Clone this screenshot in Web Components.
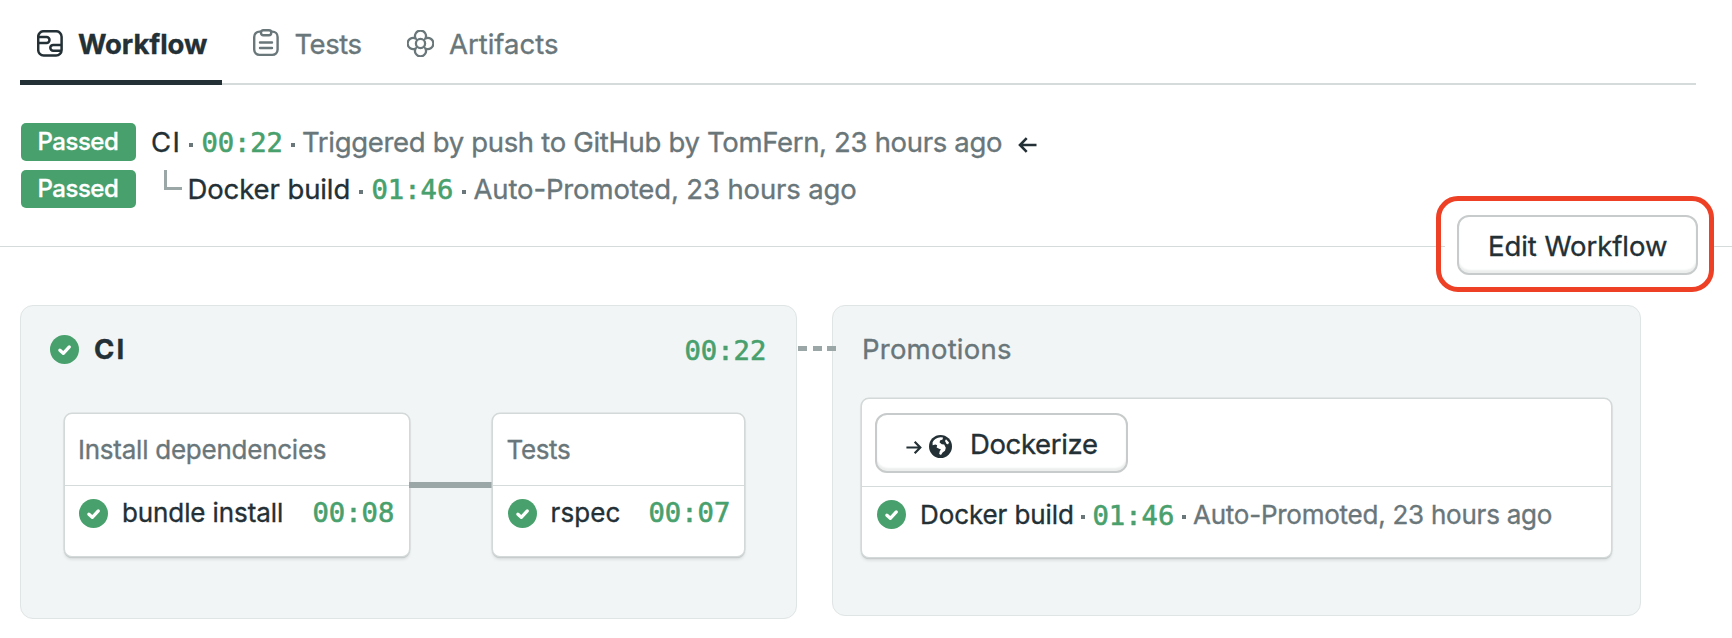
<!DOCTYPE html>
<html lang="en">
<head>
<meta charset="utf-8">
<title>Workflow</title>
<style>
  body { margin: 0; background: #fff; color: #233036; font-family: Inter, "Liberation Sans", sans-serif; }
</style>
</head>
<body>
<workflow-page></workflow-page>
<script>
const define = (name, html, setup) => {
  const tpl = document.createElement('template');
  tpl.innerHTML = html;
  customElements.define(name, class extends HTMLElement {
    constructor() {
      super();
      this.attachShadow({ mode: 'open' }).appendChild(tpl.content.cloneNode(true));
    }
    connectedCallback() { if (setup) setup(this, this.shadowRoot); }
  });
};

/* One run of text, tracked so that its ink fills the measure given in "fit". */
const ctx = document.createElement('canvas').getContext('2d');
define('ui-label', `
  <style>
    :host { display: block; flex: none; white-space: nowrap; line-height: 1; color: #233036; -webkit-text-stroke: .35px currentColor; }
    :host([tone=muted]) { color: #69767a; }
    :host([tone=white]) { color: #fff; }
    :host([tone=time]) { color: #48a06c; font-family: "DejaVu Sans Mono", "Liberation Mono", monospace; -webkit-text-stroke: .6px #48a06c; }
    span { display: inline-block; }
  </style><span><slot></slot></span>`, (el, root) => {
  const size = +el.getAttribute('size') || 27.5;
  const fit = +el.getAttribute('fit');
  const weight = el.getAttribute('weight') || 400;
  const text = el.textContent;
  el.style.fontSize = size + 'px';
  el.style.fontWeight = weight;
  el.style.width = fit + 'px';
  ctx.font = weight + ' ' + size + 'px ' + getComputedStyle(el).fontFamily;
  ctx.letterSpacing = '0.01px';
  const m = ctx.measureText(text);
  const span = root.querySelector('span');
  span.style.letterSpacing = ((fit - m.actualBoundingBoxLeft - m.actualBoundingBoxRight) / (text.length - 1)).toFixed(3) + 'px';
  span.style.marginLeft = m.actualBoundingBoxLeft.toFixed(2) + 'px';
});

define('ui-dot', `<style>:host { display: block; flex: none; width: 4px; height: 4px; background: #69767a; }</style>`);

define('icon-check', `
  <style>:host { display: block; flex: none; width: 29px; height: 29px; } svg { display: block; }</style>
  <svg width="29" height="29" viewBox="0 0 29 29"><circle cx="14.5" cy="14.5" r="14.5" fill="#48a06c"/>
  <path d="M9.9 15.2l3.4 3.1 6-6.4" fill="none" stroke="#fff" stroke-width="3.3" stroke-linecap="round" stroke-linejoin="round"/></svg>`);

define('icon-flow', `
  <style>:host { display: block; } svg { display: block; }</style>
  <svg width="26" height="27" viewBox="0 0 26 27" fill="none" stroke="#233036" stroke-width="2.5">
  <rect x="1.2" y="1.2" width="23.4" height="24.2" rx="5.5"/>
  <path d="M1.2 7.1H9.6a2.9 2.9 0 0 1 0 5.8H1.2M24.6 14.9H16.2a2.9 2.9 0 0 0 0 5.8H24.2"/></svg>`);

define('icon-clipboard', `
  <style>:host { display: block; } svg { display: block; }</style>
  <svg width="26" height="28" viewBox="0 0 26 28" fill="none" stroke="#69767a" stroke-width="2.4">
  <path d="M8 2.6H6.5A5.3 5.3 0 0 0 1.2 7.9V20.6A5.3 5.3 0 0 0 6.5 25.9H19.3A5.3 5.3 0 0 0 24.6 20.6V7.9A5.3 5.3 0 0 0 19.3 2.6H18"/>
  <rect x="8" y="1.2" width="10.2" height="5" rx="2.2"/><path d="M7 13.5H19M7 19H19" stroke-linecap="round"/></svg>`);

define('icon-flower', `
  <style>:host { display: block; } svg { display: block; }</style>
  <svg width="27" height="27" viewBox="0 0 27 27" fill="none" stroke="#69767a" stroke-width="2.3">
  <path d="M8.6 8.6A5.5 5.5 0 1 1 18.4 8.6A5.5 5.5 0 1 1 18.4 18.4A5.5 5.5 0 1 1 8.6 18.4A5.5 5.5 0 1 1 8.6 8.6Z"/>
  <circle cx="13.5" cy="13.5" r="4.6"/></svg>`);

define('icon-globe', `
  <style>:host { display: block; } svg { display: block; }</style>
  <svg width="23" height="23" viewBox="0 0 23 23"><circle cx="11.5" cy="11.5" r="11.5" fill="#233036"/>
  <path d="M3.6 7.2C5 4.4 8 2.3 11.6 2.2L14 2.6 13.6 4.6 11 5.6 10.6 7.6 12.8 9.2 15.2 9.6 16.8 12.8 16 15.8 13.6 17.6 12 20 10.2 19 10.8 16 12 14.4 9.6 13.4 7.6 12.6 8.2 10.2 6.4 9.4 3.6 10.2Z" fill="#fff"/>
  <path d="M17 4.2L20 7.6 19 9.4 17.2 8.2 16 6Z" fill="#fff"/></svg>`);

define('icon-arrow', `
  <style>:host { display: block; flex: none; width: 19px; height: 16px; } :host([back]) { transform: scaleX(-1); } svg { display: block; width: 100%; height: 100%; }</style>
  <svg viewBox="0 0 19 16" fill="none" stroke="#233036" stroke-width="2.6"><path d="M.5 8H17M10.3 1.2L17 8 10.3 14.8"/></svg>`);

define('tab-item', `
  <style>
    :host { display: flex; align-items: flex-start; box-sizing: border-box; height: 85px; margin-bottom: -2px; border-bottom: 5px solid transparent; }
    :host([active]) { border-bottom-color: #233036; }
    .icon { margin-top: 30px; flex: none; } .text { padding-top: 31px; }
  </style><div class="icon"><slot name="icon"></slot></div><div class="text"><slot></slot></div>`);

define('tab-bar', `
  <style>:host { display: flex; box-sizing: border-box; height: 85px; margin: 0 36px 0 20px; border-bottom: 2px solid #d5dbda; }</style><slot></slot>`);

define('status-badge', `
  <style>:host { display: flex; flex: none; width: 115px; height: 38px; border-radius: 5px; background: #48a06c; box-sizing: border-box; padding: 7px 0 0 17.5px; }</style><slot></slot>`);

define('run-row', `
  <style>:host { display: flex; align-items: flex-start; height: 38px; margin-bottom: 9px; }
    ::slotted(ui-label) { margin-top: 6px; } ::slotted(ui-dot) { margin-top: 20px; } </style><slot></slot>`);

define('corner-mark', `<style>:host { display: block; width: 18px; height: 20px; box-sizing: border-box; border: solid #9ba6a7; border-width: 0 0 3px 3px; }</style>`);

define('ui-button', `
  <style>:host { display: flex; align-items: flex-start; box-sizing: border-box; height: 60px; border: 2px solid #c8cbcb; border-radius: 12px; background: #fff; box-shadow: inset 0 -3px 2px #eceeee; }</style><slot></slot>`);

define('edit-bar', `
  <style>
    :host { display: flex; height: 97px; padding-right: 18px; background: linear-gradient(#d5dbda, #d5dbda) 0 50px / 100% 1px no-repeat; justify-content: flex-end; }
    .ring { box-sizing: border-box; width: 278px; height: 96px; border: 5px solid #ee4025; border-radius: 22px; padding: 14px 0 0 4px; background: linear-gradient(#fff, #fff) 4px 0 / 100% 100% no-repeat; }
    .pad { padding: 0 11px 0 12px; }
  </style><div class="ring"><div class="pad"><slot></slot></div></div>`);

define('pipeline-panel', `
  <style>:host { display: block; flex: none; box-sizing: border-box; border: 1px solid #dfe4e4; border-radius: 13px; background: #f1f5f6; }
  .head { display: flex; align-items: flex-start; }</style>
  <div class="head"><slot name="head"></slot></div><slot></slot>`);

define('job-card', `
  <style>:host { display: block; flex: none; box-sizing: border-box; border-radius: 7px; background: #fff; box-shadow: 0 0 0 1.5px #d3d8d8, 0 1px 1px 1px #b9bebe, 0 3px 3px 1px #00000014; }
  .top { border-bottom: 1px solid #d5dada; box-sizing: border-box; height: var(--top, 72px); } .row { display: flex; align-items: flex-start; }</style>
  <div class="top"><slot name="top"></slot></div><div class="row"><slot></slot></div>`);

define('solid-link', `<style>:host { display: block; flex: none; width: 84px; height: 6px; background: #9ba6a7; }</style>`);
define('dashed-link', `
  <style>:host { display: flex; flex: none; gap: 5.5px; position: relative; z-index: 1; } i { width: 9px; height: 5px; background: #9ba6a7; }</style><i></i><i></i><i></i>`);

define('workflow-page', `
  <style>
    :host { display: block; width: 1732px; height: 638px; overflow: hidden; }
    .runs { padding: 38px 0 0 21px; height: 73px; }
    .board { display: flex; padding: 12px 0 0 20px; align-items: flex-start; }
    .jobs { display: flex; align-items: flex-start; padding: 50px 0 0 44px; }
  </style>
  <tab-bar>
    <tab-item active style="width:202px;padding-left:17px"><icon-flow slot="icon"></icon-flow><ui-label weight="700" fit="129" style="margin-left:15px">Workflow</ui-label></tab-item>
    <tab-item style="width:170px;padding-left:31px"><icon-clipboard slot="icon" style="margin-top:-1px"></icon-clipboard><ui-label tone="muted" fit="66" style="margin-left:16.5px">Tests</ui-label></tab-item>
    <tab-item style="padding-left:15px"><icon-flower slot="icon"></icon-flower><ui-label tone="muted" fit="109" style="margin-left:15px">Artifacts</ui-label></tab-item>
  </tab-bar>
  <div class="runs">
    <run-row>
      <status-badge><ui-label size="24" weight="500" fit="79.5" tone="white">Passed</ui-label></status-badge>
      <ui-label fit="25.5" style="margin-left:16px">CI</ui-label><ui-dot style="margin-left:11.5px"></ui-dot>
      <ui-label size="27.2" tone="time" fit="79" style="margin-left:9.5px">00:22</ui-label><ui-dot style="margin-left:9.5px"></ui-dot>
      <ui-label tone="muted" fit="699.5" style="margin-left:8px">Triggered by push to GitHub by TomFern, 23 hours ago</ui-label>
      <icon-arrow back style="margin:14px 0 0 15.5px"></icon-arrow>
    </run-row>
    <run-row>
      <status-badge><ui-label size="24" weight="500" fit="79.5" tone="white">Passed</ui-label></status-badge>
      <corner-mark style="margin-left:27.5px"></corner-mark>
      <ui-label fit="159" style="margin-left:8px">Docker build</ui-label><ui-dot style="margin-left:10.5px"></ui-dot>
      <ui-label size="27.2" tone="time" fit="79.5" style="margin-left:9.5px">01:46</ui-label><ui-dot style="margin-left:9.5px"></ui-dot>
      <ui-label tone="muted" fit="383" style="margin-left:8px">Auto-Promoted, 23 hours ago</ui-label>
    </run-row>
  </div>
  <edit-bar>
    <ui-button><ui-label fit="177" style="margin:16px 0 0 31px;width:176px">Edit Workflow</ui-label></ui-button>
  </edit-bar>
  <div class="board">
    <pipeline-panel style="width:777px;height:314px">
      <icon-check slot="head" style="margin:29px 0 0 29px"></icon-check>
      <ui-label slot="head" weight="700" fit="27.5" style="margin:30px 0 0 16px">CI</ui-label>
      <ui-label slot="head" size="27.2" tone="time" fit="79.5" style="margin:31px 0 0 563px">00:22</ui-label>
      <div class="jobs">
        <job-card style="width:344px;height:142px">
          <ui-label slot="top" size="26" tone="muted" fit="246" style="padding:23px 0 0 15px">Install dependencies</ui-label>
          <icon-check style="margin:13px 0 0 14px"></icon-check>
          <ui-label size="26" fit="158" style="margin:14px 0 0 16px">bundle install</ui-label>
          <ui-label size="27.2" tone="time" fit="79.5" style="margin:13px 0 0 31.5px">00:08</ui-label>
        </job-card>
        <solid-link style="margin-top:68px"></solid-link>
        <job-card style="width:251px;height:142px">
          <ui-label slot="top" size="26" tone="muted" fit="62.5" style="padding:23px 0 0 14.5px">Tests</ui-label>
          <icon-check style="margin:13px 0 0 14.5px"></icon-check>
          <ui-label size="26" fit="67" style="margin:14px 0 0 16px">rspec</ui-label>
          <ui-label size="27.2" tone="time" fit="79.5" style="margin:13px 0 0 30px">00:07</ui-label>
        </job-card>
      </div>
    </pipeline-panel>
    <dashed-link style="margin:41px -4px 0 1px"></dashed-link>
    <pipeline-panel style="width:809px;height:311px">
      <ui-label slot="head" tone="muted" fit="147" style="margin:30px 0 0 31px">Promotions</ui-label>
      <job-card style="width:749px;height:158px;margin:35.5px 0 0 29px;--top:88px">
        <div slot="top" style="display:flex;padding:14px 0 0 13px">
          <ui-button style="width:253px">
            <icon-arrow style="margin:25px 0 0 29px;width:16px;height:15px"></icon-arrow>
            <icon-globe style="margin:20px 0 0 7px"></icon-globe>
            <ui-label fit="125" style="margin:16px 0 0 20px">Dockerize</ui-label>
          </ui-button>
        </div>
        <icon-check style="margin:13px 0 0 15px"></icon-check>
        <ui-label size="26" fit="150" style="margin:15px 0 0 16px">Docker build</ui-label><ui-dot style="margin:28px 0 0 9px"></ui-dot>
        <ui-label size="27.2" tone="time" fit="79.5" style="margin:15px 0 0 8.5px">01:46</ui-label><ui-dot style="margin:28px 0 0 9px"></ui-dot>
        <ui-label size="26" tone="muted" fit="359" style="margin:15px 0 0 7px">Auto-Promoted, 23 hours ago</ui-label>
      </job-card>
    </pipeline-panel>
  </div>`);
</script>
</body>
</html>
